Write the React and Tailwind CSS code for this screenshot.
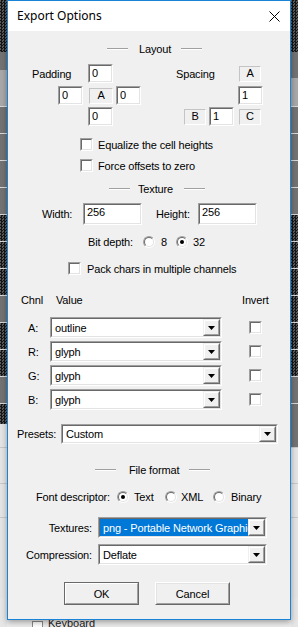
import React from "react";

const F = "font-['Liberation_Sans',Arial,sans-serif]";

function Sunken({ className = "", inner = "", children }) {
  return (
    <div className={`border border-t-[#a0a0a0] border-l-[#a0a0a0] border-b-white border-r-white ${className}`}>
      <div className={`w-full h-full border border-t-[#696969] border-l-[#696969] border-b-[#e3e3e3] border-r-[#e3e3e3] bg-white ${inner}`}>
        {children}
      </div>
    </div>
  );
}

function Input({ className = "", value }) {
  return (
    <Sunken className={className} inner="pl-[2px] text-[11px] leading-[15px] overflow-hidden whitespace-nowrap">
      {value}
    </Sunken>
  );
}

function Static({ className = "", children }) {
  return (
    <div className={`border border-t-[#c4c4c4] border-l-[#c4c4c4] border-b-white border-r-white flex items-center justify-center text-[11px] leading-[13px] ${className}`}>
      {children}
    </div>
  );
}

function Arrow() {
  return (
    <div className="w-[17px] h-full shrink-0 border border-t-[#f0f0f0] border-l-[#f0f0f0] border-b-[#696969] border-r-[#696969]">
      <div className="w-full h-full border border-t-white border-l-white border-b-[#a0a0a0] border-r-[#a0a0a0] bg-[#f0f0f0] flex items-center justify-center">
        <svg width="7" height="4" viewBox="0 0 7 4">
          <polygon points="0,0 7,0 3.5,4" fill="#000" />
        </svg>
      </div>
    </div>
  );
}

function Select({ className = "", value, selected = false }) {
  return (
    <Sunken className={className} inner="flex">
      {selected ? (
        <div className="flex-1 min-w-0 bg-[#0078d7] text-white pl-[3px] text-[11px] flex items-center overflow-hidden whitespace-nowrap">
          {value}
        </div>
      ) : (
        <div className="flex-1 min-w-0 pl-[3px] text-[11px] flex items-center overflow-hidden whitespace-nowrap">
          {value}
        </div>
      )}
      <Arrow />
    </Sunken>
  );
}

function Check({ className = "" }) {
  return <Sunken className={`w-[13px] h-[13px] shrink-0 ${className}`} />;
}

function Radio({ checked = false, className = "" }) {
  return (
    <div className={`w-[12px] h-[12px] shrink-0 rounded-full border border-t-[#a0a0a0] border-l-[#a0a0a0] border-b-white border-r-white ${className}`}>
      <div className="w-full h-full rounded-full border border-t-[#696969] border-l-[#696969] border-b-[#e3e3e3] border-r-[#e3e3e3] bg-white flex items-center justify-center">
        {checked && <div className="w-[4px] h-[4px] rounded-full bg-black" />}
      </div>
    </div>
  );
}

function Line() {
  return <div className="w-[21px] h-[2px] border-t border-t-[#a0a0a0] border-b border-b-white shrink-0" />;
}

function Button({ children, def = false, className = "" }) {
  if (def) {
    return (
      <div className={`w-[75px] h-[23px] border border-[#696969] ${className}`}>
        <div className="w-full h-full border border-t-white border-l-white border-b-[#a0a0a0] border-r-[#a0a0a0] bg-[#f0f0f0] flex items-center justify-center text-[11px]">
          {children}
        </div>
      </div>
    );
  }
  return (
    <div className={`w-[75px] h-[23px] border border-t-white border-l-white border-b-[#696969] border-r-[#696969] ${className}`}>
      <div className="w-full h-full border border-t-[#e3e3e3] border-l-[#e3e3e3] border-b-[#a0a0a0] border-r-[#a0a0a0] bg-[#f0f0f0] flex items-center justify-center text-[11px]">
        {children}
      </div>
    </div>
  );
}

const segClass = {
  c: "bg-[repeating-conic-gradient(#151515_0_25%,#5a5a5a_0_50%)] bg-[length:3px_3px]",
  g: "bg-[#737373]",
  l: "bg-[#a8a8a8]",
  w: "bg-[#d9d9d9]",
  x: "bg-[#e4e4e4]",
  y: "bg-[#c8c8c8]",
};

const leftSeg = [
  [52, "c"], [18, "g"], [36, "l"], [1, "w"], [26, "g"], [1, "w"], [26, "g"], [1, "w"], [26, "g"], [1, "w"], [26, "g"],
  [1, "w"], [26, "c"], [1, "w"], [26, "c"], [1, "w"], [26, "c"], [1, "w"], [26, "g"], [1, "w"], [26, "c"], [1, "w"],
  [26, "c"], [1, "w"], [26, "g"], [1, "w"], [20, "c"], [23, "x"], [1, "y"], [35, "x"], [1, "y"], [33, "x"], [1, "y"], [80, "x"],
];

const rightSeg = [
  [52, "c"], [26, "g"], [28, "l"], [1, "w"], [26, "g"], [1, "w"], [26, "g"], [1, "w"], [26, "g"], [1, "w"], [26, "g"],
  [1, "w"], [26, "c"], [1, "w"], [26, "c"], [1, "w"], [26, "c"], [1, "w"], [26, "c"], [1, "w"], [26, "c"], [1, "w"],
  [26, "c"], [1, "w"], [26, "g"], [1, "w"], [20, "g"], [23, "g"], [1, "y"], [35, "x"], [1, "y"], [33, "x"], [1, "y"], [80, "x"],
];

function Strip({ segs }) {
  return (
    <div className="w-[7px] h-full flex flex-col shrink-0 overflow-hidden">
      {segs.map(([h, t], i) => (
        <div key={i} className={`w-full shrink-0 ${segClass[t]}`} style={{ height: h }} />
      ))}
    </div>
  );
}

export default function App() {
  return (
    <div className={`w-[298px] h-[627px] overflow-hidden flex bg-[#e6e6e6] text-black ${F}`}>
      <Strip segs={leftSeg} />
      <div className="w-[284px] h-full flex flex-col shrink-0">
        <div className="relative z-10 h-[620px] border border-[#1883d7] flex flex-col shadow-[0_2px_6px_rgba(0,0,0,0.35)]">
          {/* Title bar */}
          <div className="h-[30px] bg-white flex items-center shrink-0">
            <span className="ml-[9px] text-[12px] font-['Noto_Sans',sans-serif] leading-[16px]">Export Options</span>
            <svg className="ml-auto mr-[10px]" width="11" height="11" viewBox="0 0 11 11">
              <path d="M0.5 0.5 L10.5 10.5 M10.5 0.5 L0.5 10.5" stroke="#000" strokeWidth="1" />
            </svg>
          </div>

          {/* Body */}
          <div className="flex-1 bg-[#f0f0f0] flex flex-col text-[11px] leading-[14px] tracking-[-0.15px]">
            {/* Layout header */}
            <div className="mt-[11px] h-[14px] flex items-center ml-[99px] shrink-0">
              <Line />
              <span className="ml-[11px] mr-[10px]">Layout</span>
              <Line />
            </div>

            {/* Layout row 1 */}
            <div className="mt-[8px] h-[19px] flex items-center shrink-0">
              <span className="ml-[24px] w-[56px] whitespace-nowrap">Padding</span>
              <Input className="w-[25px] h-[19px]" value="0" />
              <span className="ml-[63px] w-[63px] whitespace-nowrap">Spacing</span>
              <Static className="w-[22px] h-[16px]">A</Static>
            </div>
            {/* Layout row 2 */}
            <div className="mt-[3px] h-[19px] flex items-center shrink-0">
              <Input className="ml-[50px] w-[25px] h-[19px]" value="0" />
              <Static className="ml-[6px] w-[24px] h-[16px]">A</Static>
              <Input className="ml-[3px] w-[25px] h-[19px]" value="0" />
              <Input className="ml-[97px] w-[25px] h-[19px]" value="1" />
            </div>
            {/* Layout row 3 */}
            <div className="mt-[2px] h-[19px] flex items-center shrink-0">
              <Input className="ml-[80px] w-[25px] h-[19px]" value="0" />
              <Static className="ml-[71px] w-[22px] h-[16px]">B</Static>
              <Input className="ml-[3px] w-[25px] h-[19px]" value="1" />
              <Static className="ml-[5px] w-[22px] h-[16px]">C</Static>
            </div>

            {/* Checkboxes */}
            <div className="mt-[12px] h-[13px] flex items-center shrink-0">
              <Check className="ml-[72px]" />
              <span className="ml-[5px] whitespace-nowrap">Equalize the cell heights</span>
            </div>
            <div className="mt-[8px] h-[13px] flex items-center shrink-0">
              <Check className="ml-[72px]" />
              <span className="ml-[5px] whitespace-nowrap">Force offsets to zero</span>
            </div>

            {/* Texture header */}
            <div className="mt-[10px] h-[14px] flex items-center ml-[101px] shrink-0">
              <Line />
              <span className="ml-[8px] mr-[11px]">Texture</span>
              <Line />
            </div>

            {/* Width / Height */}
            <div className="mt-[7px] h-[22px] flex items-center shrink-0">
              <span className="ml-[34px] w-[41px] whitespace-nowrap">Width:</span>
              <Input className="w-[59px] h-[22px]" value="256" />
              <span className="ml-[14px] w-[42px] whitespace-nowrap">Height:</span>
              <Input className="w-[59px] h-[22px]" value="256" />
            </div>

            {/* Bit depth */}
            <div className="mt-[10px] h-[13px] flex items-center shrink-0">
              <span className="ml-[80px] w-[55px] whitespace-nowrap">Bit depth:</span>
              <Radio />
              <span className="ml-[6px] w-[15px]">8</span>
              <Radio checked />
              <span className="ml-[5px]">32</span>
            </div>

            {/* Pack chars */}
            <div className="mt-[14px] h-[13px] flex items-center shrink-0">
              <Check className="ml-[60px]" />
              <span className="ml-[6px] whitespace-nowrap">Pack chars in multiple channels</span>
            </div>

            {/* Channel header */}
            <div className="mt-[18px] h-[14px] flex items-center shrink-0">
              <span className="ml-[13px] w-[35px]">Chnl</span>
              <span className="w-[186px]">Value</span>
              <span>Invert</span>
            </div>

            {[
              ["A:", "outline", "mt-[10px]"],
              ["R:", "glyph", "mt-[3px]"],
              ["G:", "glyph", "mt-[3px]"],
              ["B:", "glyph", "mt-[3px]"],
            ].map(([l, v, m]) => (
              <div key={l} className={`${m} h-[21px] flex items-center shrink-0`}>
                <span className="ml-[20px] w-[22px]">{l}</span>
                <Select className="w-[172px] h-[21px]" value={v} />
                <Check className="ml-[27px]" />
              </div>
            ))}

            {/* Presets */}
            <div className="mt-[14px] h-[20px] flex items-center shrink-0">
              <span className="ml-[9px] w-[44px] whitespace-nowrap">Presets:</span>
              <Select className="w-[217px] h-[20px]" value="Custom" />
            </div>

            {/* File format header */}
            <div className="mt-[19px] h-[14px] flex items-center ml-[87px] shrink-0">
              <Line />
              <span className="ml-[13px] mr-[10px]">File format</span>
              <Line />
            </div>

            {/* Font descriptor */}
            <div className="mt-[13px] h-[13px] flex items-center shrink-0">
              <span className="ml-[28px] w-[81px] whitespace-nowrap">Font descriptor:</span>
              <Radio checked />
              <span className="ml-[5px] w-[31px]">Text</span>
              <Radio />
              <span className="ml-[4px] w-[32px]">XML</span>
              <Radio />
              <span className="ml-[6px]">Binary</span>
            </div>

            {/* Textures */}
            <div className="mt-[14px] h-[21px] flex items-center shrink-0">
              <span className="w-[84px] text-right whitespace-nowrap">Textures:</span>
              <Select className="ml-[6px] w-[169px] h-[21px]" value="png - Portable Network Graphics" selected />
            </div>

            {/* Compression */}
            <div className="mt-[6px] h-[21px] flex items-center shrink-0">
              <span className="w-[84px] text-right whitespace-nowrap">Compression:</span>
              <Select className="ml-[6px] w-[169px] h-[21px]" value="Deflate" />
            </div>

            {/* Buttons */}
            <div className="mt-[17px] h-[23px] flex items-center shrink-0">
              <Button def className="ml-[56px]">OK</Button>
              <Button className="ml-[16px]">Cancel</Button>
            </div>
          </div>
        </div>
        {/* background below dialog */}
        <div className="h-[7px] overflow-hidden bg-[#ececec] flex items-start">
          <div className="ml-[25px] mt-[1px] w-[11px] h-[11px] border border-[#8a8a8a] bg-white shrink-0" />
          <span className="ml-[5px] -mt-[4px] text-[11px] leading-[14px] text-[#222]">Keyboard</span>
        </div>
      </div>
      <Strip segs={rightSeg} />
    </div>
  );
}
